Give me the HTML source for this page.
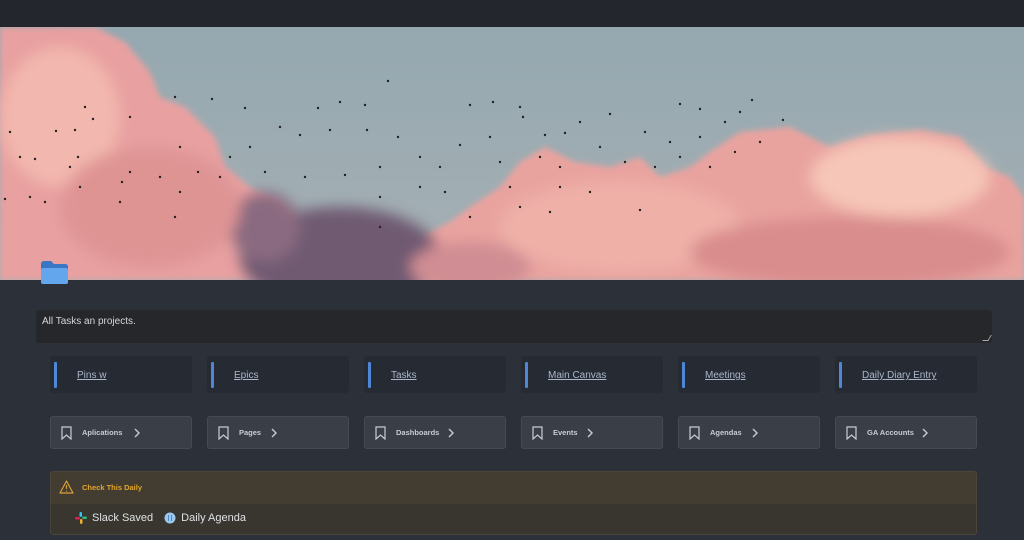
<!DOCTYPE html>
<html><head><meta charset="utf-8"><style>
*{box-sizing:border-box;margin:0;padding:0}
body{width:1024px;height:540px;overflow:hidden;background:#2c3039;font-family:"Liberation Sans",sans-serif;position:relative}
.top{position:absolute;left:0;top:0;width:1024px;height:27px;background:#23262d}
.banner{position:absolute;left:0;top:27px;width:1024px;height:253px}
.folder{position:absolute;left:40px;top:260px;width:29px;height:25px}
.ta{position:absolute;left:36px;top:310px;width:956px;height:33px;background:#25272b;border-radius:3px;color:#d4d6da;font-size:10px;padding:6px 6px}
.grip{position:absolute;right:2px;bottom:2px;width:6px;height:6px;border-right:1px solid #aaa;border-bottom:1px solid #aaa;transform:skewX(-30deg)}
.lc{position:absolute;top:356px;width:142px;height:37px;background:#262a32;border-radius:3px}
.lc i{position:absolute;left:4px;top:6px;width:3px;height:26px;background:#4f86d6;border-radius:1px}
.lc span{position:absolute;left:27px;top:14px;font-size:10px;color:#a9b6cc;text-decoration:underline}
.bc{position:absolute;top:416px;width:142px;height:33px;background:#3a3e47;border:1px solid #454a53;border-radius:3px;color:#c9ccd2;font-size:7.5px;font-weight:bold}
.bc svg{position:absolute;left:10px;top:9px}
.bc span{position:absolute;left:31px;top:11px}
.bc svg.ch{top:10px}
.call{position:absolute;left:50px;top:471px;width:927px;height:64px;background:#39362f;border:1px solid #4b4637;border-radius:3px}
.callh{height:32px;background:#433d31;position:relative}
.callh span{position:absolute;left:31px;top:11px;color:#e1a629;font-size:7.5px;font-weight:bold}
.items{position:absolute;left:24px;top:40px;color:#dfe1e4;font-size:11px;display:flex;align-items:center;gap:5px}
</style></head><body>
<div class="top"></div>
<svg class="banner" width="1024" height="253" viewBox="0 0 1024 253">
<defs>
<linearGradient id="sky" x1="0" y1="0" x2="0" y2="1"><stop offset="0" stop-color="#95a8b0"/><stop offset="1" stop-color="#a6b0b4"/></linearGradient>
<filter id="b" x="-0.2" y="-0.2" width="1.4" height="1.4"><feGaussianBlur stdDeviation="7"/></filter>
<filter id="b2"><feGaussianBlur stdDeviation="3"/></filter>
</defs>
<rect width="1024" height="253" fill="url(#sky)"/>
<g filter="url(#b2)">
<path d="M0,0 L95,0 L125,15 L150,45 L160,70 L185,80 L215,110 L225,140 L250,160 L280,175 L300,200 L330,253 L0,253Z" fill="#e8a0a0"/>
<path d="M410,253 L420,210 L450,195 L470,180 L500,160 L520,135 L545,120 L575,135 L610,140 L640,130 L660,150 L690,140 L710,125 L740,105 L790,100 L830,120 L870,108 L920,103 L960,110 L985,140 L1010,150 L1024,170 L1024,253Z" fill="#e9a39f"/>
</g>
<g filter="url(#b)">
<ellipse cx="340" cy="230" rx="100" ry="50" fill="#6f5a72"/>
<ellipse cx="265" cy="200" rx="35" ry="35" fill="#8a6a80"/>
<ellipse cx="60" cy="90" rx="60" ry="70" fill="#f2b7ae"/>
<ellipse cx="150" cy="180" rx="90" ry="60" fill="#df9494"/>
<ellipse cx="900" cy="150" rx="90" ry="40" fill="#f6c6b8"/>
<ellipse cx="620" cy="200" rx="120" ry="45" fill="#efb0a8"/>
<ellipse cx="850" cy="225" rx="160" ry="35" fill="#d98d8d"/>
<ellipse cx="470" cy="240" rx="60" ry="25" fill="#d08d93"/>
</g>
<g fill="#222">
<circle cx="388" cy="54" r="1.2"/><circle cx="175" cy="70" r="1.2"/><circle cx="212" cy="72" r="1.2"/><circle cx="245" cy="81" r="1.2"/><circle cx="318" cy="81" r="1.2"/><circle cx="340" cy="75" r="1.2"/><circle cx="365" cy="78" r="1.2"/><circle cx="470" cy="78" r="1.2"/><circle cx="493" cy="75" r="1.2"/><circle cx="520" cy="80" r="1.2"/><circle cx="523" cy="90" r="1.2"/><circle cx="580" cy="95" r="1.2"/><circle cx="610" cy="87" r="1.2"/><circle cx="680" cy="77" r="1.2"/><circle cx="700" cy="82" r="1.2"/><circle cx="740" cy="85" r="1.2"/><circle cx="752" cy="73" r="1.2"/><circle cx="783" cy="93" r="1.2"/><circle cx="85" cy="80" r="1.2"/><circle cx="93" cy="92" r="1.2"/><circle cx="130" cy="90" r="1.2"/><circle cx="56" cy="104" r="1.2"/><circle cx="75" cy="103" r="1.2"/><circle cx="10" cy="105" r="1.2"/><circle cx="280" cy="100" r="1.2"/><circle cx="300" cy="108" r="1.2"/><circle cx="330" cy="103" r="1.2"/><circle cx="367" cy="103" r="1.2"/><circle cx="398" cy="110" r="1.2"/><circle cx="460" cy="118" r="1.2"/><circle cx="490" cy="110" r="1.2"/><circle cx="545" cy="108" r="1.2"/><circle cx="565" cy="106" r="1.2"/><circle cx="645" cy="105" r="1.2"/><circle cx="670" cy="115" r="1.2"/><circle cx="700" cy="110" r="1.2"/><circle cx="725" cy="95" r="1.2"/><circle cx="250" cy="120" r="1.2"/><circle cx="230" cy="130" r="1.2"/><circle cx="180" cy="120" r="1.2"/><circle cx="20" cy="130" r="1.2"/><circle cx="35" cy="132" r="1.2"/><circle cx="78" cy="130" r="1.2"/><circle cx="70" cy="140" r="1.2"/><circle cx="130" cy="145" r="1.2"/><circle cx="160" cy="150" r="1.2"/><circle cx="122" cy="155" r="1.2"/><circle cx="198" cy="145" r="1.2"/><circle cx="220" cy="150" r="1.2"/><circle cx="265" cy="145" r="1.2"/><circle cx="305" cy="150" r="1.2"/><circle cx="345" cy="148" r="1.2"/><circle cx="380" cy="140" r="1.2"/><circle cx="420" cy="130" r="1.2"/><circle cx="440" cy="140" r="1.2"/><circle cx="500" cy="135" r="1.2"/><circle cx="540" cy="130" r="1.2"/><circle cx="560" cy="140" r="1.2"/><circle cx="600" cy="120" r="1.2"/><circle cx="625" cy="135" r="1.2"/><circle cx="655" cy="140" r="1.2"/><circle cx="680" cy="130" r="1.2"/><circle cx="710" cy="140" r="1.2"/><circle cx="735" cy="125" r="1.2"/><circle cx="760" cy="115" r="1.2"/><circle cx="30" cy="170" r="1.2"/><circle cx="45" cy="175" r="1.2"/><circle cx="5" cy="172" r="1.2"/><circle cx="80" cy="160" r="1.2"/><circle cx="120" cy="175" r="1.2"/><circle cx="175" cy="190" r="1.2"/><circle cx="180" cy="165" r="1.2"/><circle cx="380" cy="170" r="1.2"/><circle cx="420" cy="160" r="1.2"/><circle cx="445" cy="165" r="1.2"/><circle cx="510" cy="160" r="1.2"/><circle cx="560" cy="160" r="1.2"/><circle cx="550" cy="185" r="1.2"/><circle cx="590" cy="165" r="1.2"/><circle cx="640" cy="183" r="1.2"/><circle cx="470" cy="190" r="1.2"/><circle cx="380" cy="200" r="1.2"/><circle cx="520" cy="180" r="1.2"/>
</g>
</svg>
<svg class="folder" viewBox="0 0 29 25"><path d="M1,4 Q1,1 4,1 L11,1 L14,4 L25,4 Q28,4 28,7 L28,22 Q28,24 26,24 L3,24 Q1,24 1,22Z" fill="#3b76c4"/><path d="M1,10 Q1,8 3,8 L26,8 Q28,8 28,10 L28,22 Q28,24 26,24 L3,24 Q1,24 1,22Z" fill="#64a6ee"/></svg>
<div class="ta">All Tasks an projects.<div class="grip"></div></div>
<div class="lc" style="left:50px"><i></i><span>Pins w</span></div>
<div class="lc" style="left:207px"><i></i><span>Epics</span></div>
<div class="lc" style="left:364px"><i></i><span>Tasks</span></div>
<div class="lc" style="left:521px"><i></i><span>Main Canvas</span></div>
<div class="lc" style="left:678px"><i></i><span>Meetings</span></div>
<div class="lc" style="left:835px"><i></i><span>Daily Diary Entry</span></div>
<div class="bc" style="left:50px"><svg width="11" height="14"><path d="M1,1 H10 V13 L5.5,9 L1,13Z" fill="none" stroke="#c9ccd2" stroke-width="1.2"/></svg><span>Aplications</span><svg class="ch" style="left:82px" width="8" height="12"><path d="M2,2 L6,6 L2,10" fill="none" stroke="#c9ccd2" stroke-width="1.4"/></svg></div>
<div class="bc" style="left:207px"><svg width="11" height="14"><path d="M1,1 H10 V13 L5.5,9 L1,13Z" fill="none" stroke="#c9ccd2" stroke-width="1.2"/></svg><span>Pages</span><svg class="ch" style="left:62px" width="8" height="12"><path d="M2,2 L6,6 L2,10" fill="none" stroke="#c9ccd2" stroke-width="1.4"/></svg></div>
<div class="bc" style="left:364px"><svg width="11" height="14"><path d="M1,1 H10 V13 L5.5,9 L1,13Z" fill="none" stroke="#c9ccd2" stroke-width="1.2"/></svg><span>Dashboards</span><svg class="ch" style="left:82px" width="8" height="12"><path d="M2,2 L6,6 L2,10" fill="none" stroke="#c9ccd2" stroke-width="1.4"/></svg></div>
<div class="bc" style="left:521px"><svg width="11" height="14"><path d="M1,1 H10 V13 L5.5,9 L1,13Z" fill="none" stroke="#c9ccd2" stroke-width="1.2"/></svg><span>Events</span><svg class="ch" style="left:64px" width="8" height="12"><path d="M2,2 L6,6 L2,10" fill="none" stroke="#c9ccd2" stroke-width="1.4"/></svg></div>
<div class="bc" style="left:678px"><svg width="11" height="14"><path d="M1,1 H10 V13 L5.5,9 L1,13Z" fill="none" stroke="#c9ccd2" stroke-width="1.2"/></svg><span>Agendas</span><svg class="ch" style="left:72px" width="8" height="12"><path d="M2,2 L6,6 L2,10" fill="none" stroke="#c9ccd2" stroke-width="1.4"/></svg></div>
<div class="bc" style="left:835px"><svg width="11" height="14"><path d="M1,1 H10 V13 L5.5,9 L1,13Z" fill="none" stroke="#c9ccd2" stroke-width="1.2"/></svg><span>GA Accounts</span><svg class="ch" style="left:85px" width="8" height="12"><path d="M2,2 L6,6 L2,10" fill="none" stroke="#c9ccd2" stroke-width="1.4"/></svg></div>
<div class="call"><div class="callh"><svg style="position:absolute;left:8px;top:8px" width="15" height="14" viewBox="0 0 15 14"><path d="M7.5,1 L14,13 H1Z" fill="none" stroke="#d8a03a" stroke-width="1.2" stroke-linejoin="round"/><path d="M7.5,5 V9 M7.5,10.5 V11.5" stroke="#d8a03a" stroke-width="1.2"/></svg><span>Check This Daily</span></div>
<div class="items"><svg width="12" height="12" viewBox="0 0 12 12"><rect x="4.5" y="0" width="2.5" height="5" rx="1.2" fill="#36c5f0"/><rect x="7" y="4.5" width="5" height="2.5" rx="1.2" fill="#2eb67d"/><rect x="5" y="7" width="2.5" height="5" rx="1.2" fill="#ecb22e"/><rect x="0" y="5" width="5" height="2.5" rx="1.2" fill="#e01e5a"/></svg><span>Slack Saved</span><svg style="margin-left:6px" width="12" height="12"><circle cx="6" cy="6" r="5.5" fill="#9cc8ee"/><path d="M4.5,3 V9 M7.5,3 V9" stroke="#4a86c8" stroke-width="1"/></svg><span>Daily Agenda</span></div></div>
</body></html>
